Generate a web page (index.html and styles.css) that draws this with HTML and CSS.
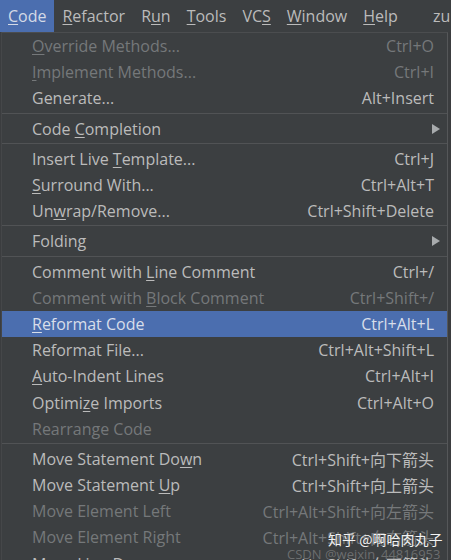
FILE: index.html
```html
<!DOCTYPE html>
<html>
<head>
<meta charset="utf-8">
<link rel="stylesheet" href="styles.css">
</head>
<body>
<div class="menubar">
  <div class="mb-item active"><u>C</u>ode</div>
  <div class="mb-item"><u>R</u>efactor</div>
  <div class="mb-item">R<u>u</u>n</div>
  <div class="mb-item"><u>T</u>ools</div>
  <div class="mb-item">VC<u>S</u></div>
  <div class="mb-item"><u>W</u>indow</div>
  <div class="mb-item"><u>H</u>elp</div>
  <div class="mb-item mb-user">zu</div>
</div>
<div class="popup">
  <div class="item disabled"><span class="label"><u>O</u>verride Methods...</span><span class="key">Ctrl+O</span></div>
  <div class="item disabled"><span class="label"><u>I</u>mplement Methods...</span><span class="key">Ctrl+I</span></div>
  <div class="item"><span class="label">Generate...</span><span class="key">Alt+Insert</span></div>
  <div class="sep"></div>
  <div class="item"><span class="label">Code <u>C</u>ompletion</span><span class="arrow"></span></div>
  <div class="sep"></div>
  <div class="item"><span class="label">Insert Live <u>T</u>emplate...</span><span class="key">Ctrl+J</span></div>
  <div class="item"><span class="label"><u>S</u>urround With...</span><span class="key">Ctrl+Alt+T</span></div>
  <div class="item"><span class="label">Un<u>w</u>rap/Remove...</span><span class="key">Ctrl+Shift+Delete</span></div>
  <div class="sep"></div>
  <div class="item"><span class="label">Folding</span><span class="arrow"></span></div>
  <div class="sep"></div>
  <div class="item"><span class="label">Comment with <u>L</u>ine Comment</span><span class="key">Ctrl+/</span></div>
  <div class="item disabled"><span class="label">Comment with <u>B</u>lock Comment</span><span class="key">Ctrl+Shift+/</span></div>
  <div class="item selected"><span class="label"><u>R</u>eformat Code</span><span class="key">Ctrl+Alt+L</span></div>
  <div class="item"><span class="label">Reformat File...</span><span class="key">Ctrl+Alt+Shift+L</span></div>
  <div class="item"><span class="label"><u>A</u>uto-Indent Lines</span><span class="key">Ctrl+Alt+I</span></div>
  <div class="item"><span class="label">Optimi<u>z</u>e Imports</span><span class="key">Ctrl+Alt+O</span></div>
  <div class="item disabled"><span class="label">Rearrange Code</span><span class="key"></span></div>
  <div class="sep"></div>
  <div class="item"><span class="label">Move Statement Do<u>w</u>n</span><span class="key">Ctrl+Shift+向下箭头</span></div>
  <div class="item"><span class="label">Move Statement <u>U</u>p</span><span class="key">Ctrl+Shift+向上箭头</span></div>
  <div class="item disabled"><span class="label">Move Element Left</span><span class="key">Ctrl+Alt+Shift+向左箭头</span></div>
  <div class="item disabled"><span class="label">Move Element Right</span><span class="key">Ctrl+Alt+Shift+向右箭头</span></div>
  <div class="item"><span class="label">Move Line Down</span><span class="key">Alt+Shift+向下箭头</span></div>
</div>
<div class="watermark">
  <span class="wm-csdn">CSDN @weixin_44816953</span>
  <span class="wm-zhihu">知乎 @啊哈肉丸子</span>
</div>
</body>
</html>
```
FILE: styles.css
```css
html, body {
  margin: 0;
  padding: 0;
  width: 451px;
  height: 560px;
  overflow: hidden;
  background: #3b3d3f;
  font-family: "Open Sans", "Noto Sans CJK SC", sans-serif;
  position: relative;
}
u {
  text-decoration: underline;
  text-underline-offset: 2px;
  text-decoration-thickness: 1px;
}
.menubar {
  height: 32px;
  display: flex;
  align-items: stretch;
  background: #3c3f41;
  color: #bbbbbb;
  font-size: 16px;
  white-space: nowrap;
}
.mb-item {
  display: flex;
  align-items: center;
  padding: 0 8px;
}
.mb-item.active {
  background: #4b6eaf;
  color: #d4dae6;
}
.mb-user {
  margin-left: auto;
  padding: 0;
  width: 18px;
  overflow: hidden;
}
.popup {
  width: 445px;
  margin-left: 1px;
  border-top: 1px solid #4b4d4f;
  border-left: 1px solid #454749;
  border-right: 1px solid #555759;
  background: #3c3f41;
  font-size: 16px;
  color: #bbbbbb;
}
.item {
  height: 26.2px;
  display: flex;
  align-items: center;
  justify-content: space-between;
  padding: 0 13px 0 30px;
  white-space: nowrap;
}
.item.disabled {
  color: #75787a;
}
.item.selected {
  background: #4b6eaf;
  color: #d8deea;
}
.sep {
  height: 4px;
  padding-top: 1px;
  box-sizing: border-box;
}
.sep::before {
  content: "";
  display: block;
  height: 1px;
  background: #515355;
}
.arrow {
  width: 0;
  height: 0;
  border-top: 5px solid transparent;
  border-bottom: 5px solid transparent;
  border-left: 8px solid #a8abad;
  margin-right: -6px;
}
.watermark {
  position: absolute;
  left: 283px;
  top: 527px;
  width: 160px;
  height: 32px;
}
.wm-csdn {
  position: absolute;
  left: 4px;
  top: 18px;
  font-size: 13px;
  color: rgba(200, 200, 200, 0.35);
  white-space: nowrap;
}
.wm-zhihu {
  position: absolute;
  left: 45px;
  top: 2px;
  font-size: 14px;
  color: #f2f2f2;
  white-space: nowrap;
  font-family: "Noto Sans CJK SC", sans-serif;
}
```
